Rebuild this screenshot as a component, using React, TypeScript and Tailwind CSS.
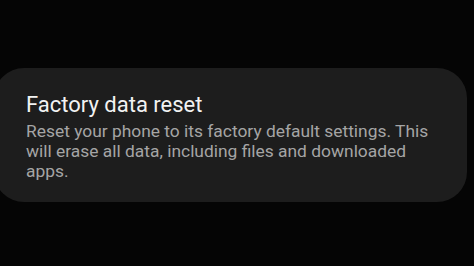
export default function App() {
    return (
        <div className="w-[474px] h-[266px] bg-[#050505] overflow-hidden pt-[68px]" style={{ fontFamily: 'Roboto, "Liberation Sans", sans-serif' }}>
            <div className="ml-[-6px] w-[473px] h-[134px] rounded-[30px] bg-[#1d1d1d] pl-[32px] pr-4 pt-[23px]">
                <div className="text-[22px] leading-[27px] text-[#f2f2f2]">Factory data reset</div>
                <p className="mt-[3px] text-[17.4px] leading-[20px] text-[#a5a5a5] w-[410px]">
                    Reset your phone to its factory default settings. This will erase all data, including files and downloaded apps.
                </p>
            </div>
        </div>
    );
}
